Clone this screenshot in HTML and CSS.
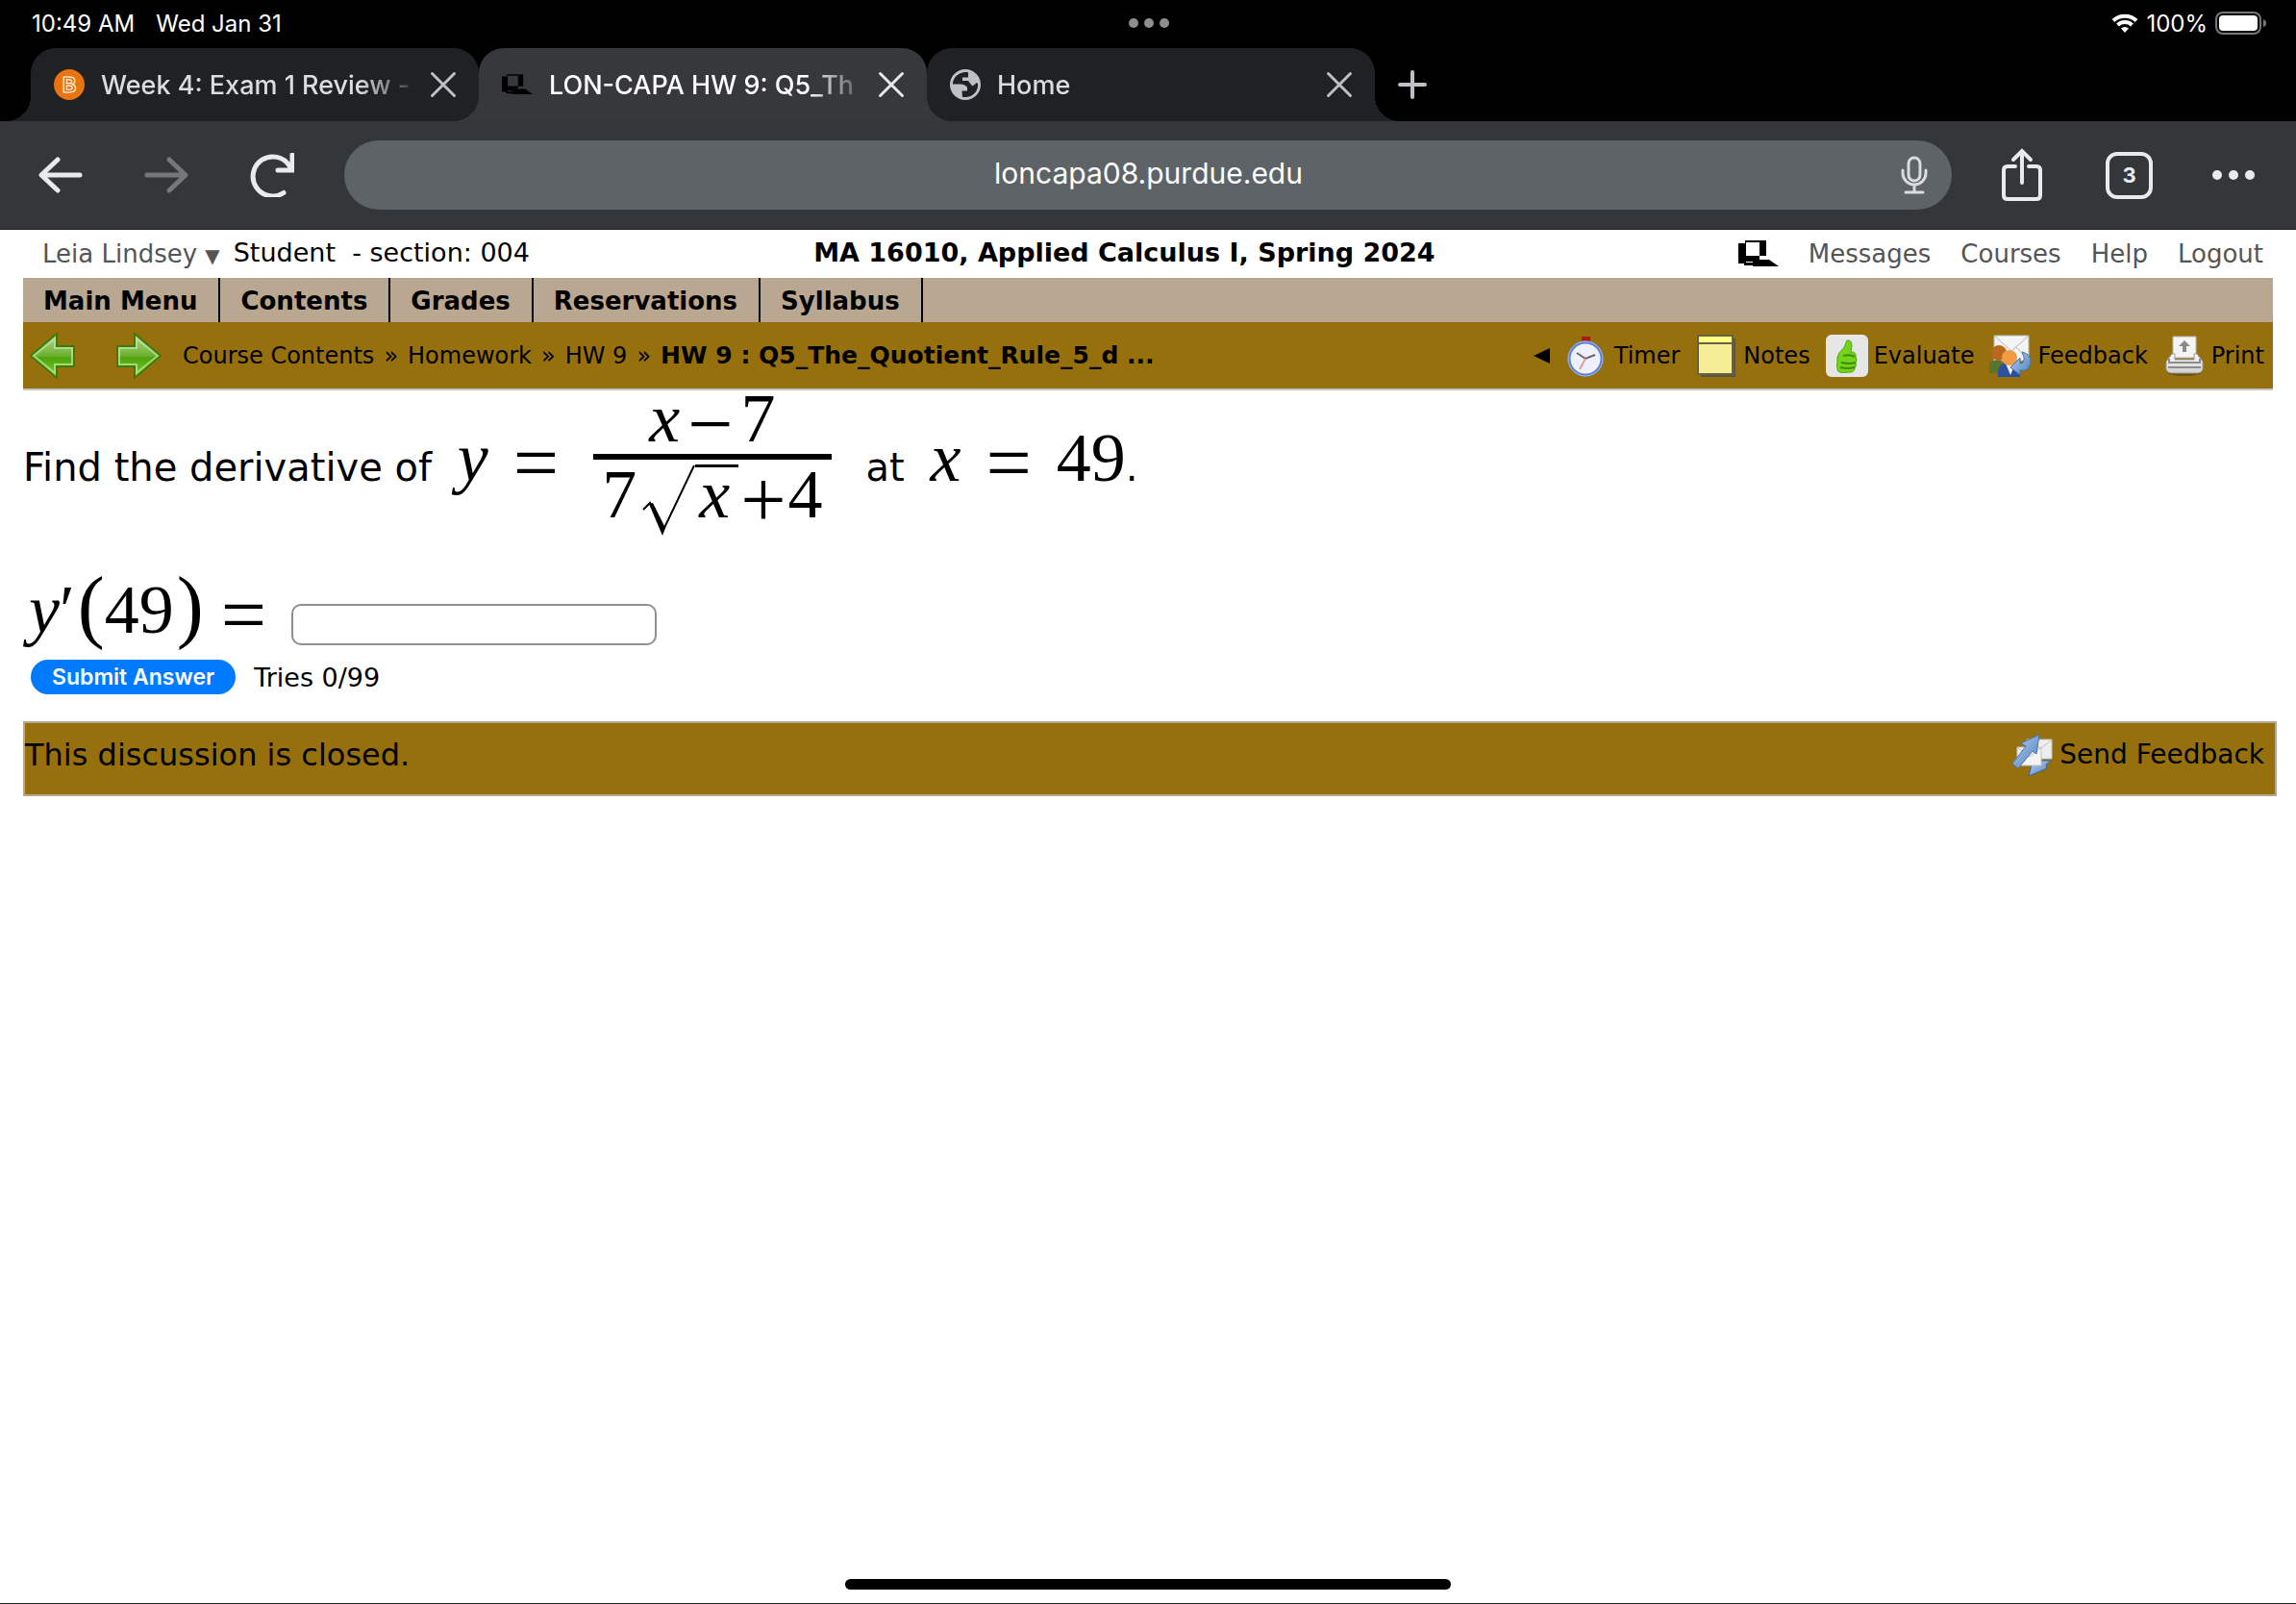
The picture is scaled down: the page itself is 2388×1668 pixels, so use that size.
FILE: index.html
```html
<!doctype html>

<html lang="en">
  <head>
    <meta charset="utf-8">
    <meta name="viewport" content="width=device-width">
    <title>LON-CAPA HW 9: Q5_The_Quotient_Rule_5_d</title>
    <link rel="stylesheet" href="styles.css">
  </head>

  <body>
    <!-- Shared icon shapes. -->
    <svg class="defs" aria-hidden="true">
      <defs>
        <symbol id="close" viewBox="0 0 28 28">
          <path d="M2.500 2.500 25.500 25.500M25.500 2.500 2.500 25.500" fill="none" stroke="currentColor" stroke-width="3" stroke-linecap="round"/>
        </symbol>
        <symbol id="loncapa" viewBox="0 0 42 28">
          <path d="M0 3h7V0h22v16h-6V3h4V2H8v14h14v4h-6v2H8v2h6v2H6v-2H0z"/>
          <path d="M22 2h7v14h-7zM15 20h17l10 7H15v-1h-3v-2H8v-1h7z"/>
        </symbol>
        <linearGradient id="green" x1="0" y1="0" x2="0" y2="1">
          <stop offset="0" stop-color="#b5d99a"/>
          <stop offset=".5" stop-color="#6db12f"/>
          <stop offset=".55" stop-color="#4ea40a"/>
          <stop offset="1" stop-color="#7cd321"/>
        </linearGradient>
        <linearGradient id="blue" x1="0" y1="0" x2="1" y2="1">
          <stop offset="0" stop-color="#b4d0ee"/>
          <stop offset="1" stop-color="#4f7fbd"/>
        </linearGradient>
        <linearGradient id="paper" x1="0" y1="0" x2="0" y2="1">
          <stop offset="0" stop-color="#fdfdfd"/>
          <stop offset="1" stop-color="#cfcfcf"/>
        </linearGradient>
      </defs>
    </svg>

    <!-- Device status line. -->
    <div class="status">
      <div class="status-left"><span>10:49 AM</span><span>Wed Jan 31</span></div>
      <svg class="status-dots" viewBox="0 0 42 10"><circle cx="5" cy="5" r="5"/><circle cx="21" cy="5" r="5"/><circle cx="37" cy="5" r="5"/></svg>
      <div class="status-right">
        <svg class="wifi" viewBox="0 0 28 20">
          <path d="M2 7.500a17.500 17.500 0 0 1 24 0M6.500 12a11 11 0 0 1 15 0" fill="none" stroke="#fff" stroke-width="4"/>
          <path d="M14 20l-4-4.500a6 6 0 0 1 8 0z" fill="#fff"/>
        </svg>
        <span>100%</span>
        <svg class="battery" viewBox="0 0 53 24">
          <rect x="1" y="1" width="46" height="22" rx="7" fill="none" stroke="#777" stroke-width="2"/>
          <rect x="4" y="4" width="40" height="16" rx="4" fill="#fff"/>
          <path d="M50 8q3 1 3 4t-3 4z" fill="#777"/>
        </svg>
      </div>
    </div>

    <!-- Browser tabs. -->
    <div class="tabs">
      <div class="tab tab-first">
        <svg class="favicon" viewBox="0 0 32 32"><circle cx="16" cy="16" r="16" fill="#e8750f"/><text class="favicon-letter" x="16" y="24" text-anchor="middle">B</text></svg>
        <span class="tab-title">Week 4: Exam 1 Review -</span>
        <button class="tab-close" aria-label="Close tab"><svg><use href="#close"/></svg></button>
      </div>
      <div class="tab tab-active">
        <svg class="favicon"><use href="#loncapa"/></svg>
        <span class="tab-title">LON-CAPA HW 9: Q5_Th</span>
        <button class="tab-close" aria-label="Close tab"><svg><use href="#close"/></svg></button>
      </div>
      <div class="tab tab-last">
        <svg class="favicon" viewBox="0 0 32 32">
          <circle cx="16" cy="16" r="16" fill="#bdc1c6"/>
          <path d="M19 3.300C12 1.500 3 7 2.900 15.500L9 15.500q7-.5 9 3.500v3.500h-5.500l.5 6.400C23 30.500 30 23 29 15l-1.500-1-2.500 2.500q-1.500 1.500-3-.5l-3-4h-6V8.500h6z" fill="#202124"/>
        </svg>
        <span class="tab-title">Home</span>
        <button class="tab-close" aria-label="Close tab"><svg><use href="#close"/></svg></button>
      </div>
      <button class="tab-new" aria-label="New tab"><svg viewBox="0 0 30 30"><path d="M15 2v26M2 15h26" fill="none" stroke="#bdc1c6" stroke-width="4" stroke-linecap="round"/></svg></button>
    </div>

    <!-- Browser toolbar. -->
    <div class="toolbar">
      <button class="tool" aria-label="Back"><svg viewBox="0 0 46 46"><path d="M43 23H4M20 7 3 23l17 16" fill="none" stroke="currentColor" stroke-width="5" stroke-linecap="round" stroke-linejoin="round"/></svg></button>
      <button class="tool tool-off" aria-label="Forward"><svg viewBox="0 0 46 46"><path d="M3 23h39M26 7l17 16-17 16" fill="none" stroke="currentColor" stroke-width="5" stroke-linecap="round" stroke-linejoin="round"/></svg></button>
      <button class="tool" aria-label="Reload"><svg viewBox="0 0 46 46"><path d="M35 41.500A20.500 20.500 0 1 1 41 13.500M44 2v16H29" fill="none" stroke="currentColor" stroke-width="5" stroke-linecap="round"/></svg></button>
      <div class="address">
        <input class="address-text" type="text" value="loncapa08.purdue.edu" aria-label="Address">
        <button class="mic" aria-label="Voice search"><svg viewBox="0 0 28 40"><rect x="8" y="2" width="12" height="24" rx="6"/><path d="M2 15v3a12 12 0 0 0 24 0v-3M14 31v6M5 38h18"/></svg></button>
      </div>
      <button class="tool" aria-label="Share"><svg class="tall" viewBox="0 0 46 56"><path d="M16 19H8q-4 0-4 4v26q0 4 4 4h30q4 0 4-4V23q0-4-4-4h-8M23 36V4M14 12l9-9 9 9" fill="none" stroke="currentColor" stroke-width="4" stroke-linecap="round"/></svg></button>
      <button class="tool tab-count">3</button>
      <button class="tool" aria-label="More"><svg viewBox="0 0 46 46"><circle cx="6" cy="23" r="5"/><circle cx="23" cy="23" r="5"/><circle cx="40" cy="23" r="5"/></svg></button>
    </div>

    <div class="page">
      <div class="header">
        <div class="user">
          <a class="user-name" href="#">Leia Lindsey <small>▼</small></a>
          <span>Student &nbsp;- section: 004</span>
        </div>
        <strong>MA 16010, Applied Calculus I, Spring 2024</strong>
        <div class="header-links">
          <svg class="logo"><use href="#loncapa"/></svg>
          <a href="#">Messages</a>
          <a href="#">Courses</a>
          <a href="#">Help</a>
          <a href="#">Logout</a>
        </div>
      </div>

      <div class="menu">
        <a href="#">Main Menu</a>
        <a href="#">Contents</a>
        <a href="#">Grades</a>
        <a href="#">Reservations</a>
        <a href="#">Syllabus</a>
      </div>

      <div class="crumbs">
        <a class="arrow" href="#" aria-label="Previous"><svg viewBox="0 0 48 50"><path d="M28 2v13h18v21H28v12L1 25z" fill="url(#green)" stroke="#3b7d0c" stroke-width="2"/><path d="M26 7v10h18v17H26v9L4 25z" fill="none" stroke="#c4e6a8" stroke-opacity=".7" stroke-width="2"/></svg></a>
        <a class="arrow" href="#" aria-label="Next"><svg viewBox="0 0 48 50"><path d="M20 2v13H2v21h18v12l27-23z" fill="url(#green)" stroke="#3b7d0c" stroke-width="2"/><path d="M22 7v10H4v17h18v9l22-18z" fill="none" stroke="#c4e6a8" stroke-opacity=".7" stroke-width="2"/></svg></a>
        <div class="path">
          <a href="#">Course Contents</a>
          <span>»</span>
          <a href="#">Homework</a>
          <span>»</span>
          <a href="#">HW 9</a>
          <span>»</span>
          <strong>HW 9 : Q5_The_Quotient_Rule_5_d ...</strong>
        </div>
        <div class="functions">
          <a href="#" aria-label="Collapse"><svg class="collapse" viewBox="0 0 18 16"><path d="M17 0v16L0 8z"/></svg></a>
          <a href="#">
            <svg viewBox="0 0 44 44">
              <path d="M16 2h9v8h-9z" fill="#b51515"/>
              <circle cx="20" cy="25" r="17" fill="#eef1fb" stroke="#5f83d6" stroke-width="3"/>
              <circle cx="20" cy="25" r="18" fill="none" stroke="#a3b8ea" stroke-width="1"/>
              <path d="M11 19l9 6 10-4" fill="none" stroke="#666" stroke-width="2"/>
              <path d="M20 25l-6 11" stroke="#e79b9b" stroke-width="2"/>
            </svg>Timer</a>
          <a href="#">
            <svg viewBox="0 0 44 44">
              <path d="M6 4h36v40H6z" fill="#5b5540"/>
              <path d="M3 1h36v40H3z" fill="#f5ee96" stroke="#666247" stroke-width="2"/>
              <path d="M4 2h34v6H4z" fill="#ffff80"/>
              <path d="M3 9h36" stroke="#666247" stroke-width="2"/>
            </svg>Notes</a>
          <a href="#">
            <svg viewBox="0 0 44 44">
              <rect width="44" height="44" rx="6" fill="#e6e6e6"/>
              <path d="M22 6q5-1 5 6l-1 6q6 0 5 5 2 3 0 6 1 4-1 6-1 5-6 4-12 2-12-3-1-4 0-7-1-6 2-10 6-5 8-13z" fill="#74d31b" stroke="#4ba80d" stroke-width="1"/>
              <path d="M18 22q7-2 12 1M16 29q8 2 15 0M15 34q7 2 15 0" fill="none" stroke="#3e8d0b" stroke-width="2"/>
            </svg>Evaluate</a>
          <a href="#">
            <svg viewBox="0 0 44 44">
              <path d="M5 1h36v26H5z" fill="#f4f4f4" stroke="#b9b9b9"/>
              <path d="M5 1l18 16L41 1M5 27l13-13M41 27L28 13" fill="none" stroke="#b5b5b5"/>
              <path d="M0 40V30q5-5 12-3l6 13z" fill="#55762c"/>
              <circle cx="10" cy="19" r="8" fill="#b8681f"/>
              <path d="M9 44q-1-15 11-15t12 15z" fill="#2b50a0"/>
              <path d="M17 30l5 12 5-12z" fill="#eee"/>
              <circle cx="21" cy="24" r="8" fill="#f19b45"/>
              <path d="M22 34l10-10v6q5 0 4-7l-2-5q10 2 9 12-2 9-11 7v5z" fill="url(#blue)" stroke="#3e6fae"/>
            </svg>Feedback</a>
          <a href="#">
            <svg viewBox="0 0 44 44">
              <ellipse cx="22" cy="39" rx="18" ry="4" fill="#6a5010"/>
              <path d="M10 2h24v22H10z" fill="#f4f4f4" stroke="#b6b6b6"/>
              <path d="M22 6l6 6h-4v6h-4v-6h-4z" fill="#8a8a8a"/>
              <path d="M9 20h3v6h20v-6h3l6 8v8q-1 4-5 4H8q-4 0-5-4v-8z" fill="url(#paper)" stroke="#999"/>
              <path d="M6 25v4h32v-4M5 34h34" fill="none" stroke="#8d8d8d" stroke-width="2"/>
            </svg>Print</a>
        </div>
      </div>

      <form class="problem">
        <div class="question">
          <span class="math-line">Find the derivative of <span class="math"><i>y</i> <b>=</b></span></span>
          <span class="fraction">
            <span class="numerator"><i>x</i><b>−</b>7</span>
            <span class="denominator">7<svg class="radical" viewBox="0 0 56 76"><path d="M2 48l7-7 14 28L55 2" fill="none" stroke="#000" stroke-width="2"/><path d="M8 42l4-1 13 26-3 8z"/></svg><span class="root"><i>x</i></span><b>+</b>4</span>
          </span>
          <span class="math-line">at <span class="math"><i>x</i> <b>=</b> 49</span>.</span>
        </div>

        <div class="answer">
          <label class="math" for="answer"><i>y</i>′<span class="paren">(</span>49<span class="paren">)</span> <b>=</b></label>
          <input id="answer" class="answer-box" type="text">
        </div>

        <div class="submit">
          <button class="submit-button" type="button">Submit Answer</button>
          <span>Tries 0/99</span>
        </div>
      </form>

      <div class="discussion">
        <span>This discussion is closed.</span>
        <a href="#">
          <svg viewBox="0 0 44 44">
            <path d="M16 6h26v20H16z" fill="#eee" stroke="#c4c4c4"/>
            <path d="M16 6l13 11L42 6" fill="none" stroke="#bbb"/>
            <path d="M18 44l4-16h20l-6 4 1 4z" fill="url(#blue)" stroke="#37649c"/>
            <path d="M6 14h25v19H6z" fill="#f3f3f3" stroke="#c4c4c4"/>
            <path d="M6 14l13 10 12-10" fill="none" stroke="#bbb"/>
            <path d="M29 1l-3 20-4-3L7 36l-6-5 14-18-5-3z" fill="url(#blue)" stroke="#4674ae"/>
          </svg>Send Feedback</a>
      </div>
    </div>

    <div class="home-bar"></div>
  </body>
</html>
```

FILE: styles.css
```css
* { box-sizing: border-box; }
body {
  display: flex;
  flex-direction: column;
  min-height: 100vh;
  margin: 0;
  background: #fff;
  border-bottom: 1px solid #202124;
  font-family: Verdana, "DejaVu Sans", sans-serif;
  font-size: 26px;
  color: #000;
}
a { color: inherit; text-decoration: none; }
button {
  padding: 0;
  border: 0;
  background: none;
  color: inherit;
  font: inherit;
}
svg { display: block; flex: none; }
.defs { position: absolute; width: 0; height: 0; }

/* Device status line. */
.status {
  display: grid;
  grid-template-columns: 1fr auto 1fr;
  align-items: center;
  height: 50px;
  padding: 0 31px 2px 33px;
  background: #000;
  color: #fff;
  font-family: Inter, sans-serif;
  font-size: 24px;
}
.status-left { display: flex; gap: 22px; }
.status-dots { width: 42px; height: 10px; fill: #8e8e8e; }
.status-right {
  display: flex;
  align-items: center;
  justify-content: flex-end;
  gap: 8px;
}
.wifi { width: 28px; height: 20px; }
.battery { width: 53px; height: 24px; }

/* Tabs. */
.tabs {
  display: flex;
  height: 76px;
  padding-left: 32px;
  background: #000;
  color: #dadce0;
  font-family: Inter, sans-serif;
  font-size: 27px;
  font-weight: 500;
}
.tab {
  --fill: #202124;
  position: relative;
  display: flex;
  align-items: center;
  width: 466px;
  padding: 0 23px 0 24px;
  border-radius: 26px 26px 0 0;
  background: var(--fill);
}
.tab-active {
  --fill: #37383c;
  z-index: 1;
  color: #fff;
}
.tab-first::before, .tab-active::before, .tab-active::after, .tab-last::after {
  content: "";
  position: absolute;
  bottom: 0;
  width: 26px;
  height: 26px;
}
.tab-first::before, .tab-active::before {
  right: 100%;
  background: radial-gradient(circle at 0 0, transparent 26px, var(--fill) 26px);
}
.tab-active::after, .tab-last::after {
  left: 100%;
  background: radial-gradient(circle at 100% 0, transparent 26px, var(--fill) 26px);
}
.favicon { width: 32px; height: 32px; }
.favicon-letter {
  fill: none;
  stroke: #fff;
  stroke-width: 1px;
  font: bold 22px Inter, sans-serif;
}
.tab-title {
  flex: 1;
  overflow: hidden;
  margin: 0 9px 0 17px;
  white-space: nowrap;
  mask-image: linear-gradient(to left, transparent, #000 64px);
}
.tab-close, .tab-close svg { width: 28px; height: 28px; }
.tab-close { color: #bdc1c6; }
.tab-active .tab-close { color: #e8eaed; }
.tab-new { margin-left: 24px; }
.tab-new svg { width: 30px; height: 30px; }

/* Toolbar. */
.toolbar {
  display: flex;
  align-items: center;
  height: 113px;
  padding: 0 42px 0 40px;
  border-bottom: 1px solid #1c1d1f;
  background: #33373a;
  color: #e8eaed;
}
.tool { margin-right: 64px; }
.tool svg { width: 46px; height: 46px; fill: currentColor; }
.tool svg.tall { height: 56px; }
.tool-off { color: #75777a; }
.address {
  display: flex;
  flex: 1;
  align-items: center;
  height: 72px;
  margin: 0 50px 0 -12px;
  padding: 0 25px 0 54px;
  border-radius: 36px;
  background: #5e6367;
}
.address-text {
  flex: 1;
  padding: 0 0 4px;
  border: 0;
  background: none;
  color: #fff;
  font: 30px Inter, sans-serif;
  text-align: center;
}
.mic svg {
  width: 28px;
  height: 40px;
  fill: none;
  stroke: #dadce0;
  stroke-width: 3px;
  stroke-linecap: round;
}
.tab-count {
  width: 49px;
  height: 49px;
  margin-right: 61px;
  border: 4px solid #e8eaed;
  border-radius: 12px;
  font: bold 22px Inter, sans-serif;
}
.tool:last-child { margin-right: 0; }

/* Page. */
.page { flex: 1; padding: 0 24px; }
.header {
  display: flex;
  align-items: center;
  justify-content: space-between;
  height: 50px;
  padding: 0 10px 4px 20px;
  font-size: 27px;
}
.user, .header-links { display: flex; align-items: center; }
.user { gap: 14px; }
.user-name, .header-links {
  padding-top: 4px;
  color: #555;
  font-size: 26px;
}
.user-name small { font-size: 20px; }
.header-links { gap: 31px; padding-left: 20px; }
.logo { width: 42px; height: 28px; fill: #000; }
.menu {
  display: flex;
  height: 46px;
  background: #b9a791;
  font-weight: bold;
  line-height: 48px;
}
.menu a { padding: 0 22px 0 21px; border-right: 2px solid #000; }
.crumbs {
  display: flex;
  align-items: center;
  height: 71px;
  padding: 0 9px 0 7px;
  border-bottom: 2px solid #c8c6c3;
  background: #97700e;
  font-size: 24px;
}
.arrow { margin-right: 41px; }
.arrow svg { width: 48px; height: 50px; }
.arrow + .arrow { margin-right: 22px; }
.path {
  display: flex;
  align-items: baseline;
  gap: 10px;
}
.path strong { font-size: 25px; }
.functions {
  display: flex;
  align-items: center;
  gap: 16px;
  margin-left: auto;
}
.functions a, .discussion a {
  display: flex;
  align-items: center;
  gap: 6px;
}
.functions svg, .discussion svg { width: 44px; height: 44px; }
.functions svg.collapse { width: 18px; height: 16px; }

/* Problem. */
.problem { margin: 0; }
.question {
  display: flex;
  font-size: 40px;
}
.math-line { line-height: 140px; white-space: pre; }
.math, .fraction {
  font-family: "Liberation Serif", serif;
  font-size: 72px;
}
.math { margin-left: 14px; }
.math b, .fraction b {
  margin: 0 8px;
  font-size: 84px;
  font-weight: normal;
  line-height: 40px;
  vertical-align: -10px;
}
.fraction { margin: 0 36px 0 28px; text-align: center; }
.numerator, .denominator {
  display: block;
  padding: 0 9px;
  white-space: nowrap;
}
.numerator { height: 66px; line-height: 58px; }
.denominator {
  height: 86px;
  border-top: 6px solid #000;
  line-height: 72px;
}
.denominator b { margin: 0 2px; }
.radical {
  display: inline-block;
  width: 56px;
  height: 76px;
  margin-left: 5px;
  vertical-align: -20px;
}
.root {
  display: inline-block;
  padding: 0 9px 0 4px;
  border-top: 3px solid #000;
  line-height: 56px;
}
.answer {
  display: flex;
  align-items: baseline;
  margin-top: 34px;
  line-height: 84px;
}
.answer .math { margin: 0 26px 0 6px; }
.answer .math b { margin: 0; }
.paren { margin-left: 3px; font-size: 84px; line-height: 40px; }
.answer-box {
  width: 380px;
  height: 43px;
  padding: 0 10px;
  border: 2px solid #8e8e93;
  border-radius: 10px;
  background: #fff;
  font: inherit;
  line-height: 36px;
}
.submit {
  display: flex;
  align-items: center;
  gap: 19px;
  margin: 10px 0 28px 8px;
  font-size: 27px;
}
.submit-button {
  height: 36px;
  padding: 0 22px;
  border-radius: 18px;
  background: #007aff;
  color: #fff;
  font: 600 23px Inter, sans-serif;
}
.discussion {
  display: flex;
  justify-content: space-between;
  height: 78px;
  margin-right: -4px;
  padding-right: 11px;
  border: 2px solid #b9a791;
  background: #97700e;
  font-size: 32px;
  line-height: 66px;
}
.discussion a { height: 66px; font-size: 28px; }

.home-bar {
  align-self: center;
  width: 630px;
  height: 11px;
  margin-bottom: 14px;
  border-radius: 6px;
  background: #000;
}
```
